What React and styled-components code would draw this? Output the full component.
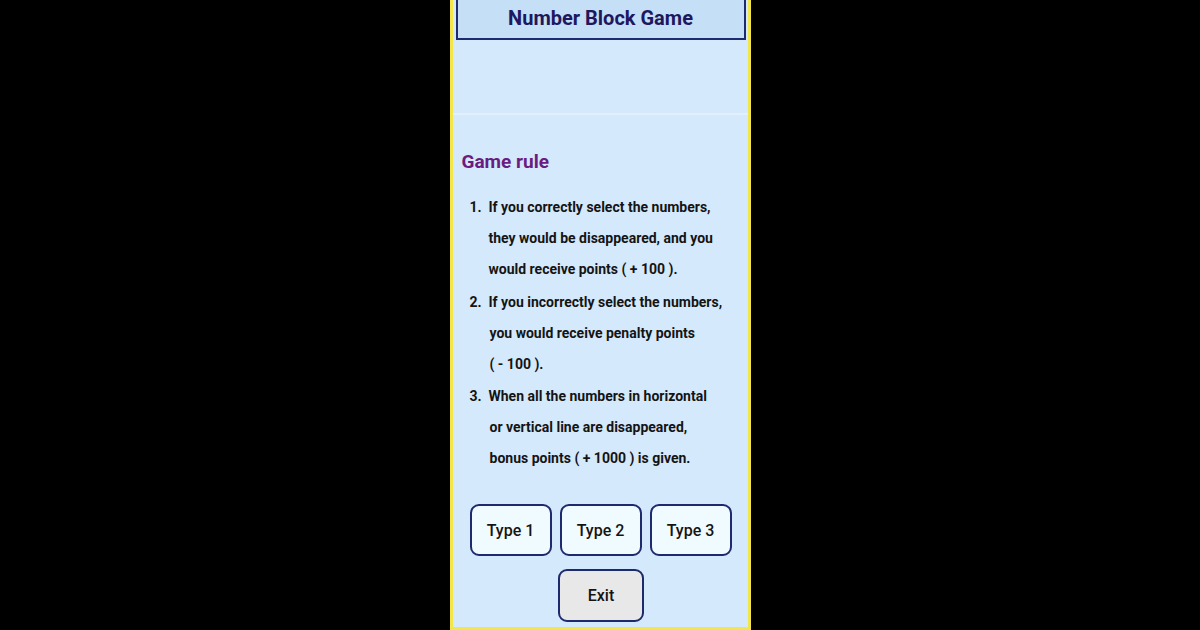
import React from "react";
import styled, { createGlobalStyle } from "styled-components";

const Global = createGlobalStyle`
  html, body { margin: 0; padding: 0; background: #000; }
  body { font-family: Roboto, "Noto Sans", "Liberation Sans", sans-serif; }
`;

const Screen = styled.div`
  width: 1200px;
  height: 630px;
  background: #000;
  display: flex;
  justify-content: center;
  overflow: hidden;
`;

const Phone = styled.div`
  box-sizing: border-box;
  width: 301px;
  height: 630px;
  background: #d4e9fb;
  border: 3px solid #f3e64a;
  border-top: none;
  display: flex;
  flex-direction: column;
`;

const Header = styled.header`
  box-sizing: border-box;
  height: 40px;
  margin: 0 2px 0 3px;
  background: #c4dff6;
  border: 2px solid #1d2a6e;
  border-top: none;
  display: flex;
  align-items: center;
  justify-content: center;
  padding-bottom: 2px;
`;

const HeaderTitle = styled.h1`
  margin: 0;
  font-size: 20px;
  font-weight: 700;
  color: #20175e;
`;

const Banner = styled.div`
  height: 73px;
  border-bottom: 2px solid #e2f0fd;
`;

const Content = styled.section`
  display: flex;
  flex-direction: column;
  padding: 35px 0 0 9px;
`;

const RuleTitle = styled.h2`
  margin: 0;
  font-size: 19px;
  line-height: 24px;
  font-weight: 700;
  color: #6b1c80;
`;

const RuleList = styled.ol`
  list-style: none;
  margin: 18px 0 0 0;
  padding: 0 0 0 8px;
  display: flex;
  flex-direction: column;
  gap: 1.5px;
`;

const RuleItem = styled.li`
  display: grid;
  grid-template-columns: 19px 1fr;
  font-size: 14px;
  line-height: 31px;
  font-weight: 700;
  color: #141414;
`;

const RuleNumber = styled.span``;

const RuleLine = styled.span`
  display: block;
  padding-left: ${(p) => p.$indent || 0}px;
`;

const ButtonRow = styled.div`
  display: flex;
  justify-content: center;
  gap: 8px;
  margin-top: 30px;
  padding-left: 1px;
`;

const GameButton = styled.button`
  box-sizing: border-box;
  width: ${(p) => p.$w}px;
  height: ${(p) => p.$h}px;
  border: 2px solid #1d2a6e;
  border-radius: 9px;
  background: ${(p) => p.$bg};
  font-family: Roboto, "Noto Sans", "Liberation Sans", sans-serif;
  font-size: 16px;
  font-weight: 500;
  color: #141414;
  padding: 0;
  cursor: pointer;
`;

const ExitRow = styled.div`
  display: flex;
  justify-content: center;
  margin-top: 13px;
  padding-left: 2px;
`;

const rules = [
  ["If you correctly select the numbers,", "they would be disappeared, and you", "would receive points ( + 100 )."],
  ["If you incorrectly select the numbers,", "you would receive penalty points", "( - 100 )."],
  ["When all the numbers in horizontal", "or vertical line are disappeared,", "bonus points ( + 1000 ) is given."],
];

const indents = [-2, 1, 1];

export default function App() {
  return (
    <>
      <Global />
      <Screen>
        <Phone>
          <Header>
            <HeaderTitle>Number Block Game</HeaderTitle>
          </Header>
          <Banner />
          <Content>
            <RuleTitle>Game rule</RuleTitle>
            <RuleList>
              {rules.map((lines, i) => (
                <RuleItem key={i}>
                  <RuleNumber>{i + 1}.</RuleNumber>
                  <span>
                    {lines.map((line, j) => (
                      <RuleLine key={j} $indent={j === 0 ? 0 : indents[i]}>
                        {line}
                      </RuleLine>
                    ))}
                  </span>
                </RuleItem>
              ))}
            </RuleList>
          </Content>
          <ButtonRow>
            <GameButton $w={82} $h={52} $bg="#f0fbff">Type 1</GameButton>
            <GameButton $w={82} $h={52} $bg="#f0fbff">Type 2</GameButton>
            <GameButton $w={82} $h={52} $bg="#f0fbff">Type 3</GameButton>
          </ButtonRow>
          <ExitRow>
            <GameButton $w={86} $h={53} $bg="#e8e8e9">Exit</GameButton>
          </ExitRow>
        </Phone>
      </Screen>
    </>
  );
}
